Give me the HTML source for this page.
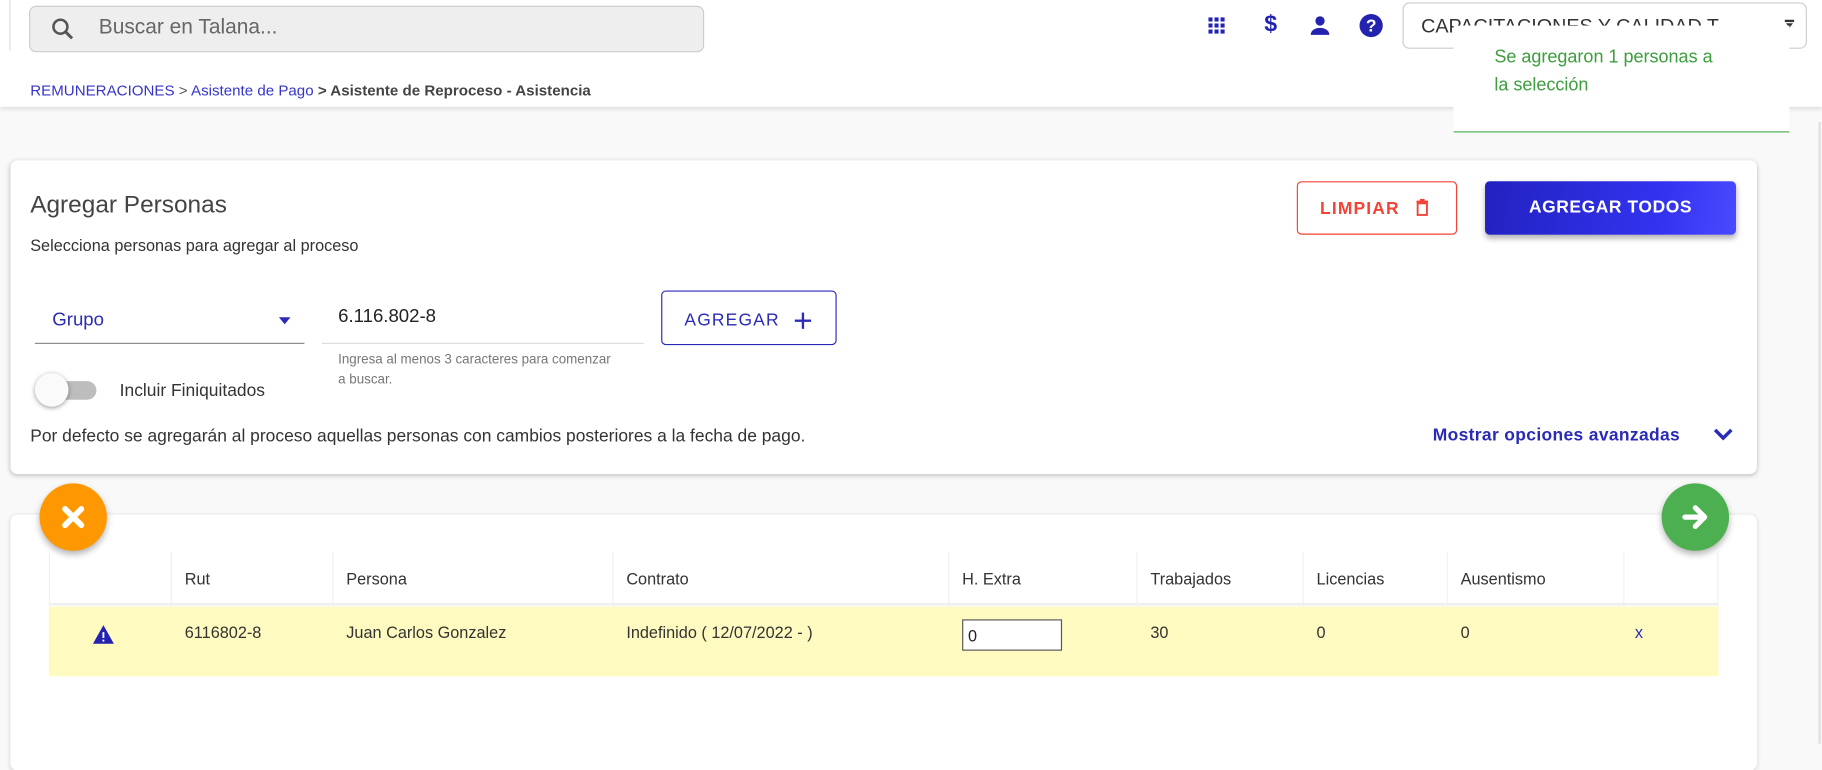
<!DOCTYPE html>
<html><head><meta charset="utf-8">
<style>
*{box-sizing:border-box;margin:0;padding:0}
html,body{width:1822px;height:744px;overflow:hidden;background:#f9f9f9;font-family:"Liberation Sans",sans-serif}
#w{position:absolute;left:0;top:0;width:1568px;height:640px;transform:scale(1.16199);transform-origin:0 0;background:#f9f9f9}
.a{position:absolute}
.hdr{left:0;top:0;width:1568px;height:92px;background:#fff;box-shadow:0 2px 4px rgba(0,0,0,.12)}
.blue{color:#2a2ab8}
</style></head><body><div id="w">
<div class="a hdr"></div>
<div class="a" style="left:8px;top:0;width:1px;height:44px;background:#ddd"></div>
<div class="a" style="left:25px;top:5px;width:581px;height:40px;background:#eee;border:1px solid #ccc;border-radius:6px"></div>
<svg class="a" style="left:42px;top:13px" width="24" height="24" viewBox="0 0 24 24"><circle cx="10" cy="10" r="6" fill="none" stroke="#555" stroke-width="2.2"/><path d="M14.5 14.5 L20 20" stroke="#555" stroke-width="2.6"/></svg>
<div class="a" style="left:85px;top:13px;font-size:18px;color:#666">Buscar en Talana...</div>
<svg class="a" style="left:1039px;top:14px" width="16" height="16" viewBox="0 0 16 16" fill="#2323b0"><rect x="1" y="1" width="3.5" height="3.5"/><rect x="6.2" y="1" width="3.5" height="3.5"/><rect x="11.4" y="1" width="3.5" height="3.5"/><rect x="1" y="6.2" width="3.5" height="3.5"/><rect x="6.2" y="6.2" width="3.5" height="3.5"/><rect x="11.4" y="6.2" width="3.5" height="3.5"/><rect x="1" y="11.4" width="3.5" height="3.5"/><rect x="6.2" y="11.4" width="3.5" height="3.5"/><rect x="11.4" y="11.4" width="3.5" height="3.5"/></svg>
<div class="a" style="left:1088px;top:10px;font-size:20px;font-weight:bold;color:#2323b0">$</div>
<svg class="a" style="left:1126px;top:12px" width="20" height="20" viewBox="0 0 20 20" fill="#2323b0"><circle cx="10" cy="6" r="4"/><path d="M2 18c0-4 4-6 8-6s8 2 8 6z"/></svg>
<svg class="a" style="left:1169px;top:11px" width="22" height="22" viewBox="0 0 22 22"><circle cx="11" cy="11" r="10" fill="#2323b0"/><text x="11" y="16" text-anchor="middle" font-family="Liberation Sans" font-weight="bold" font-size="15" fill="#fff">?</text></svg>
<div class="a" style="left:1207px;top:2px;width:348px;height:40px;border:1px solid #ccc;border-radius:6px;background:#fff;overflow:hidden"><div style="position:absolute;left:15px;top:10px;font-size:17px;color:#333;white-space:nowrap">CAPACITACIONES Y CALIDAD T</div><div style="position:absolute;right:10px;top:14px;width:8px;height:2px;background:#333"></div><div style="position:absolute;right:11px;top:17px;border-left:3px solid transparent;border-right:3px solid transparent;border-top:4px solid #333"></div></div>
<div class="a" style="left:1251px;top:22px;width:289px;height:92px;background:#fff;border-bottom:1px solid #4caf50"></div>
<div class="a" style="left:1286px;top:38px;font-size:15.5px;line-height:24px;color:#3c9e3c">Se agregaron 1 personas a<br>la selección</div>
<div class="a" style="left:1565px;top:105px;width:2px;height:535px;background:#e0e0e0"></div>
<div class="a" style="left:26px;top:70px;font-size:13px;white-space:nowrap"><span style="color:#3535c8">REMUNERACIONES</span> <span style="color:#555">&gt;</span> <span style="color:#3535c8">Asistente de Pago</span> <span style="color:#444;font-weight:bold">&gt; Asistente de Reproceso - Asistencia</span></div>

<div class="a" style="left:9px;top:138px;width:1503px;height:270px;background:#fff;border-radius:6px;box-shadow:0 1px 4px rgba(0,0,0,.25)"></div>
<div class="a" style="left:26px;top:165px;font-size:21px;color:#444">Agregar Personas</div>
<div class="a" style="left:26px;top:203px;font-size:14px;color:#333">Selecciona personas para agregar al proceso</div>
<div class="a" style="left:1116px;top:156px;width:138px;height:46px;border:1px solid #f44336;border-radius:4px;color:#f44336;font-size:15px;font-weight:bold;letter-spacing:1px;padding:14px 0 0 19px">LIMPIAR</div>
<svg class="a" style="left:1218px;top:171px" width="12" height="16" viewBox="0 0 12 16"><rect x="2" y="4" width="8" height="10" fill="none" stroke="#f44336" stroke-width="1.6"/><path d="M1 2.5h10M4 1h4" stroke="#f44336" stroke-width="1.6"/></svg>
<div class="a" style="left:1278px;top:156px;width:216px;height:46px;border-radius:4px;background:linear-gradient(100deg,#2222c0,#3333f0 70%,#4a4aff);box-shadow:0 3px 5px rgba(0,0,0,.3);color:#fff;font-size:15px;font-weight:bold;letter-spacing:.5px;text-align:center;padding-top:14px">AGREGAR TODOS</div>

<div class="a blue" style="left:45px;top:267px;font-size:16px">Grupo</div>
<div class="a" style="left:240px;top:273px;border-left:5px solid transparent;border-right:5px solid transparent;border-top:6px solid #2a2ab8"></div>
<div class="a" style="left:30px;top:295px;width:232px;height:1px;background:#888"></div>
<div class="a" style="left:291px;top:264px;font-size:16px;color:#222">6.116.802-8</div>
<div class="a" style="left:277px;top:295px;width:277px;height:1px;background:#ddd"></div>
<div class="a" style="left:291px;top:302px;font-size:11.5px;line-height:17px;color:#777">Ingresa al menos 3 caracteres para comenzar<br>a buscar.</div>
<div class="a" style="left:569px;top:250px;width:151px;height:47px;border:1px solid #2a2ab8;border-radius:4px;color:#2a2ab8;font-size:15px;letter-spacing:1px;padding:16px 0 0 19px">AGREGAR</div>
<div class="a" style="left:684px;top:275px;width:14px;height:2px;background:#2a2ab8"></div>
<div class="a" style="left:690px;top:269px;width:2px;height:14px;background:#2a2ab8"></div>
<div class="a" style="left:33px;top:328px;width:50px;height:16px;border-radius:8px;background:#bdbdbd"></div>
<div class="a" style="left:30px;top:321px;width:29px;height:29px;border-radius:50%;background:#fafafa;box-shadow:0 1px 4px rgba(0,0,0,.4)"></div>
<div class="a" style="left:103px;top:328px;font-size:15px;color:#333">Incluir Finiquitados</div>
<div class="a" style="left:26px;top:367px;font-size:15px;color:#333">Por defecto se agregarán al proceso aquellas personas con cambios posteriores a la fecha de pago.</div>
<div class="a blue" style="left:1233px;top:366px;font-size:15px;font-weight:bold;letter-spacing:.3px">Mostrar opciones avanzadas</div>
<svg class="a" style="left:1473px;top:367px" width="20" height="14" viewBox="0 0 20 14"><path d="M3 3l7 7 7-7" fill="none" stroke="#2a2ab8" stroke-width="3"/></svg>

<div class="a" style="left:9px;top:443px;width:1503px;height:220px;background:#fff;border-radius:6px;box-shadow:0 1px 4px rgba(0,0,0,.15)"></div>
<div class="a" style="left:34px;top:416px;width:58px;height:58px;border-radius:50%;background:#ff9800;box-shadow:0 3px 6px rgba(0,0,0,.3)"></div>
<svg class="a" style="left:52px;top:434px" width="22" height="22" viewBox="0 0 22 22"><path d="M4 4l14 14M18 4L4 18" stroke="#fff" stroke-width="5" stroke-linecap="round"/></svg>
<div class="a" style="left:1430px;top:416px;width:58px;height:58px;border-radius:50%;background:#4caf50;box-shadow:0 3px 6px rgba(0,0,0,.3)"></div>
<svg class="a" style="left:1447px;top:433px" width="24" height="24" viewBox="0 0 24 24"><path d="M3 12h16M12 4l8 8-8 8" fill="none" stroke="#fff" stroke-width="4.5" stroke-linecap="round" stroke-linejoin="round"/></svg>

<div class="a" style="left:42px;top:475px;width:1437px;height:46px;border-bottom:2px solid #eee"></div>
<div class="a" style="left:42px;top:522px;width:1437px;height:60px;background:#fffac0"></div>
<div class="a" style="left:42px;top:475px;width:1px;height:47px;background:#f0f0f0"></div>
<div class="a" style="left:147px;top:475px;width:1px;height:47px;background:#f0f0f0"></div>
<div class="a" style="left:286px;top:475px;width:1px;height:47px;background:#f0f0f0"></div>
<div class="a" style="left:527px;top:475px;width:1px;height:47px;background:#f0f0f0"></div>
<div class="a" style="left:816px;top:475px;width:1px;height:47px;background:#f0f0f0"></div>
<div class="a" style="left:978px;top:475px;width:1px;height:47px;background:#f0f0f0"></div>
<div class="a" style="left:1121px;top:475px;width:1px;height:47px;background:#f0f0f0"></div>
<div class="a" style="left:1245px;top:475px;width:1px;height:47px;background:#f0f0f0"></div>
<div class="a" style="left:1397px;top:475px;width:1px;height:47px;background:#f0f0f0"></div>
<div class="a" style="left:1478px;top:475px;width:1px;height:47px;background:#f0f0f0"></div>
<div class="a" style="left:0;top:490px;width:1568px;font-size:14px;color:#333">
<span class="a" style="left:159px">Rut</span><span class="a" style="left:298px">Persona</span><span class="a" style="left:539px">Contrato</span><span class="a" style="left:828px">H. Extra</span><span class="a" style="left:990px">Trabajados</span><span class="a" style="left:1133px">Licencias</span><span class="a" style="left:1257px">Ausentismo</span></div>
<svg class="a" style="left:79px;top:537px" width="20" height="18" viewBox="0 0 20 18"><path d="M10 1L19 17H1z" fill="#2323b0"/><rect x="9.2" y="7" width="1.6" height="5" fill="#fff"/><rect x="9.2" y="13.5" width="1.6" height="1.6" fill="#fff"/></svg>
<div class="a" style="left:0;top:536px;width:1568px;font-size:14px;color:#333">
<span class="a" style="left:159px">6116802-8</span><span class="a" style="left:298px">Juan Carlos Gonzalez</span><span class="a" style="left:539px">Indefinido ( 12/07/2022 - )</span><span class="a" style="left:990px">30</span><span class="a" style="left:1133px">0</span><span class="a" style="left:1257px">0</span><span class="a" style="left:1407px;color:#2a2ab8">x</span></div>
<div class="a" style="left:828px;top:533px;width:86px;height:27px;background:#fff;border:1px solid #555;font-size:14px;padding:5px 0 0 4px;color:#222">0</div>
</div></body></html>
